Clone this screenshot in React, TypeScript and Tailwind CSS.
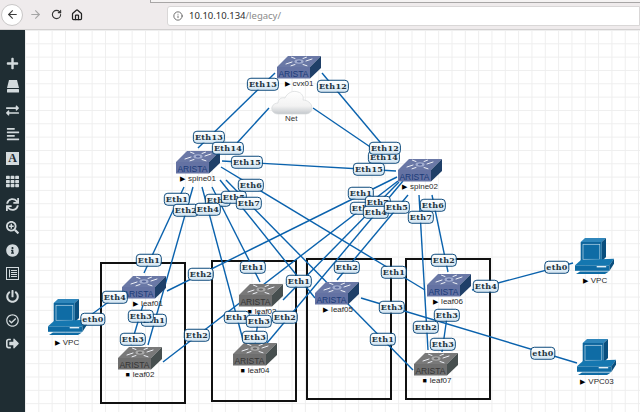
import React from 'react';
import {
  FaPlus, FaExchangeAlt, FaAlignLeft, FaTh, FaSync, FaSearchPlus, FaInfoCircle, FaPowerOff, FaRegCheckCircle, FaSignOutAlt,
} from 'react-icons/fa';
import { ArrowLeft, ArrowRight, RotateCw, Home, Info } from 'lucide-react';

// diagram data is in page pixels, the canvas starts at 25,30
const OX = 25;
const OY = 30;

const links = [
  [275, 73, 198, 148], [269, 108, 237, 143], [322, 73, 385, 148], [313, 108, 385, 157],
  [222, 161, 396, 171], [184, 187, 144, 273], [193, 187, 148, 345], [202, 187, 243, 340],
  [212, 187, 260, 282], [220, 180, 315, 298], [226, 180, 413, 370], [221, 167, 425, 290],
  [397, 177, 167, 291], [398, 181, 163, 362], [399, 182, 283, 300], [403, 181, 267, 343],
  [408, 195, 337, 280], [432, 195, 448, 272], [419, 195, 428, 350], [80, 323, 122, 292],
  [143, 305, 131, 345], [259, 312, 255, 345], [472, 290, 573, 263], [361, 298, 577, 363],
  [448, 310, 442, 352],
];

const boxes = [
  { x: 100, y: 262, w: 86, h: 142 },
  { x: 211, y: 260, w: 86, h: 142 },
  { x: 306, y: 258, w: 86, h: 142 },
  { x: 405, y: 258, w: 86, h: 142 },
];

const switches = [
  { x: 277, y: 56, on: true, name: 'cvx01', lx: 299, ly: 84 },
  { x: 176, y: 151, on: true, name: 'spine01', lx: 198, ly: 179 },
  { x: 398, y: 159, on: true, name: 'spine02', lx: 420, ly: 187 },
  { x: 122, y: 276, on: true, name: 'leaf01', lx: 148, ly: 304 },
  { x: 118, y: 347, on: false, name: 'leaf02', lx: 140, ly: 375 },
  { x: 239, y: 284, on: false, name: 'leaf03', lx: 262, ly: 312 },
  { x: 233, y: 343, on: false, name: 'leaf04', lx: 255, ly: 371 },
  { x: 315, y: 282, on: true, name: 'leaf05', lx: 338, ly: 310 },
  { x: 427, y: 274, on: true, name: 'leaf06', lx: 448, ly: 302 },
  { x: 414, y: 353, on: false, name: 'leaf07', lx: 437, ly: 381 },
];

const pcs = [
  { x: 48, y: 299, name: 'VPC', lx: 67, ly: 343 },
  { x: 575, y: 238, name: 'VPC', lx: 595, ly: 281 },
  { x: 577, y: 339, name: 'VPC03', lx: 597, ly: 382 },
];

// later entries sit on top of earlier ones
const ports: [string, number, number][] = [
  ['Eth13', 263, 84], ['Eth12', 333, 86], ['Eth13', 209, 137], ['Eth14', 228, 148], ['Eth15', 247, 162],
  ['Eth6', 251, 185], ['Eth3', 218, 200], ['Eth5', 234, 197], ['Eth7', 249, 203], ['Eth1', 177, 199],
  ['Eth2', 186, 210], ['Eth4', 208, 209], ['Eth14', 384, 157], ['Eth12', 385, 148], ['Eth15', 369, 169],
  ['Eth1', 361, 193], ['Eth3', 363, 208], ['Eth7', 378, 202], ['Eth4', 376, 212], ['Eth5', 397, 207],
  ['Eth6', 433, 205], ['Eth7', 421, 217], ['Eth1', 149, 260], ['Eth2', 201, 274], ['Eth4', 115, 297],
  ['eth0', 93, 319], ['Eth1', 154, 320], ['Eth3', 141, 316], ['Eth3', 133, 339], ['Eth2', 197, 335],
  ['Eth1', 253, 267], ['Eth1', 237, 317], ['Eth3', 259, 321], ['Eth2', 285, 317], ['Eth3', 255, 337],
  ['Eth1', 299, 281], ['Eth2', 347, 267], ['Eth1', 394, 272], ['Eth3', 392, 307], ['Eth1', 383, 339],
  ['Eth2', 444, 260], ['Eth4', 486, 286], ['eth0', 557, 267], ['Eth3', 447, 315], ['Eth2', 426, 327],
  ['Eth3', 443, 344], ['eth0', 543, 353],
];

const SwitchIcon: React.FC<{ on: boolean }> = ({ on }) => {
  const top = on ? '#6a78a6' : '#797979';
  const front = on ? '#6472a3' : '#6f6f6f';
  const side = on ? '#1f3f68' : '#474f4f';
  const ink = on ? '#1a3a78' : '#353535';
  return (
    <svg width="44" height="24" viewBox="0 0 44 24" className="block">
      <polygon points="0,12 11,1 44,1 33,12" fill={top} />
      <rect x="0" y="12" width="33" height="11.5" fill={front} />
      <polygon points="33,12 44,1 44,13 33,23.5" fill={side} />
      <ellipse cx="22" cy="6.5" rx="4.5" ry="2.2" fill={on ? '#a3aed0' : '#aaaaaa'} />
      <ellipse cx="22" cy="6.5" rx="2.2" ry="1" fill={on ? '#55659a' : '#666666'} />
      <g stroke="#eef0f6" strokeWidth="1" strokeLinecap="round" fill="none">
        <path d="M15 7 9 9M29 6 35 4M18 3.5 14.5 2.2M26 9.5 30 10.8M26 3.5 29.5 2.2M18 9.5 14 10.8" />
      </g>
      <text x="16.5" y="21.5" textAnchor="middle" fontSize="8.5" fontFamily="Liberation Sans, sans-serif" fill={ink}>
        ARISTA
      </text>
    </svg>
  );
};

const PcIcon = () => (
  <svg width="39" height="36" viewBox="0 0 39 36" className="block">
    <polygon points="5.7,4 10,0 31,0 26.7,4" fill="#2f86bb" />
    <polygon points="26.7,4 31,0 31,19 26.7,23.5" fill="#0a4f7e" />
    <rect x="5.7" y="4" width="21" height="19.5" fill="#0e659c" />
    <rect x="8" y="6.3" width="16.8" height="15" fill="#0f6ca5" stroke="#bcd9ea" strokeWidth="0.7" />
    <polygon points="0,27.3 6,22 39,20.7 34.5,27.3" fill="#1577b0" />
    <rect x="0" y="27.3" width="34.5" height="5.5" fill="#0e6ba4" />
    <polygon points="34.5,27.3 39,20.7 39,25.7 34.5,32.8" fill="#0a4f7e" />
    <rect x="21.7" y="28" width="9.5" height="1.4" fill="#e2eff7" />
    <polygon points="5,33.6 34,33.6 30,36 1,36" fill="#0e6ba4" />
  </svg>
);

const Cloud = () => (
  <svg width="42" height="26" viewBox="0 0 42 26" className="block">
    <defs>
      <linearGradient id="cloud" x1="0" y1="0" x2="0" y2="1">
        <stop offset="0" stopColor="#ffffff" />
        <stop offset="0.65" stopColor="#f2f2f2" />
        <stop offset="1" stopColor="#c4c8cc" />
      </linearGradient>
    </defs>
    <path
      d="M7 24C2 24 0 20 1 17 2 14 5 13 7 13 7 9 11 7 14 8 16 3 22 0 27 2 31 3 33 7 32 10 36 10 41 13 41 18 41 22 38 24 34 24Z"
      fill="url(#cloud)"
      stroke="#d5d8da"
      strokeWidth="0.7"
    />
  </svg>
);

const NodeName: React.FC<{ text: string; x: number; y: number; mark: string }> = ({ text, x, y, mark }) => (
  <div
    className="absolute -translate-x-1/2 -translate-y-1/2 whitespace-nowrap font-['Liberation_Sans',sans-serif] text-[8px] leading-none text-[#2a2a2a]"
    style={{ left: x - OX, top: y - OY }}
  >
    <span className="mr-[3px] text-[7px] text-black">{mark}</span>
    {text}
  </div>
);

const DiskIcon = () => (
  <svg width="14" height="13" viewBox="0 0 14 13" fill="currentColor">
    <polygon points="3,0 11,0 13,8 1,8" />
    <rect x="1" y="9" width="12" height="3.5" rx="0.5" />
  </svg>
);

const FontBox = () => (
  <div className="flex h-[13px] w-[13px] shrink-0 items-center justify-center bg-[#d3dadd] font-['Liberation_Serif',serif] text-[12px] font-bold leading-none text-[#1f2d33]">
    A
  </div>
);

const TableIcon = () => (
  <svg width="13" height="13" viewBox="0 0 13 13" fill="none" stroke="currentColor" className="shrink-0">
    <rect x="0.5" y="0.5" width="12" height="12" strokeWidth="1" />
    <path d="M3.5 2.5V10.5M5 3.5H11M5 5.5H11M5 7.5H11M5 9.5H11" strokeWidth="1" />
  </svg>
);

export default function App() {
  return (
    <div className="flex h-[412px] w-[640px] flex-col overflow-hidden bg-white">
      <div className="relative flex h-[30px] shrink-0 items-center border-b border-[#d2d0d0] bg-[#efebec]">
        <div className="absolute left-[150px] right-0 top-0 h-[3px] border-b border-l border-[#a8a6a6] bg-[#f5f3f3]" />
        <div className="ml-px flex h-[22px] w-[22px] items-center justify-center rounded-full border border-[#c9c7c7] bg-white">
          <ArrowLeft size={13} color="#3a3a3a" />
        </div>
        <ArrowRight size={13} color="#a5a5a5" className="ml-[6px]" />
        <RotateCw size={11} color="#333" strokeWidth={2.4} className="ml-[9px]" />
        <Home size={12} color="#222" strokeWidth={2.5} className="ml-[9px]" />
        <div className="ml-[84px] mt-[3px] flex h-[20px] flex-1 items-center rounded-l-[3px] border border-[#d9d7d7] bg-white pl-[5px] font-['Noto_Sans',sans-serif] text-[9.5px]">
          <Info size={10} color="#555" />
          <span className="ml-[6px] text-[#2c2c2c]">10.10.10.134</span>
          <span className="text-[#8a8a8a]">/legacy/</span>
        </div>
      </div>
      <div className="flex min-h-0 flex-1">
        <div className="flex w-[25px] shrink-0 flex-col items-center gap-[10.15px] bg-[#1f2d33] pt-[27px] text-[#d3dadd]">
          <FaPlus size={13} className="shrink-0" />
          <div className="h-[14px] shrink-0"><DiskIcon /></div>
          <FaExchangeAlt size={13} className="shrink-0" />
          <FaAlignLeft size={14} className="shrink-0" />
          <FontBox />
          <FaTh size={13} className="shrink-0" />
          <FaSync size={13} className="shrink-0" />
          <FaSearchPlus size={13} className="shrink-0" />
          <FaInfoCircle size={13} className="shrink-0" />
          <TableIcon />
          <FaPowerOff size={13} className="shrink-0" />
          <FaRegCheckCircle size={13} className="shrink-0" />
          <FaSignOutAlt size={13} className="shrink-0" />
        </div>
        <div className="relative flex-1 overflow-hidden bg-white bg-[linear-gradient(#eeeeee_1px,transparent_1px),linear-gradient(90deg,#eeeeee_1px,transparent_1px)] bg-size-[13.33px_13.33px]">
          {boxes.map((b, i) => (
            <div
              key={i}
              className="absolute border-2 border-[#111]"
              style={{ left: b.x - OX, top: b.y - OY, width: b.w, height: b.h }}
            />
          ))}
          <svg width="615" height="382" viewBox="25 30 615 382" className="absolute left-0 top-0">
            {links.map((l, i) => (
              <line key={i} x1={l[0]} y1={l[1]} x2={l[2]} y2={l[3]} stroke="#0a62ad" strokeWidth="1.4" />
            ))}
          </svg>
          {switches.map((s) => (
            <React.Fragment key={s.name}>
              <div className="absolute" style={{ left: s.x - OX, top: s.y - OY - 1 }}>
                <SwitchIcon on={s.on} />
              </div>
              <NodeName text={s.name} x={s.lx} y={s.ly} mark={s.on ? '▶' : '■'} />
            </React.Fragment>
          ))}
          {pcs.map((p, i) => (
            <React.Fragment key={i}>
              <div className="absolute" style={{ left: p.x - OX, top: p.y - OY }}>
                <PcIcon />
              </div>
              <NodeName text={p.name} x={p.lx} y={p.ly} mark="▶" />
            </React.Fragment>
          ))}
          <div className="absolute left-[246px] top-[60px]">
            <Cloud />
          </div>
          <div className="absolute left-[260px] top-[85px] font-['Liberation_Sans',sans-serif] text-[8px] leading-none text-[#333]">
            Net
          </div>
          {ports.map(([text, x, y], i) => (
            <div
              key={i}
              className="absolute flex h-[12.5px] -translate-x-1/2 -translate-y-1/2 items-center rounded-[4px] border-[1.3px] border-[#0d4a7c] bg-linear-to-b from-white to-[#d3e6f3] px-px font-['DejaVu_Serif',serif] text-[8px] font-bold leading-none tracking-[0.3px] text-[#23333d]"
              style={{ left: x - OX, top: y - OY }}
            >
              {text}
            </div>
          ))}
        </div>
      </div>
    </div>
  );
}
